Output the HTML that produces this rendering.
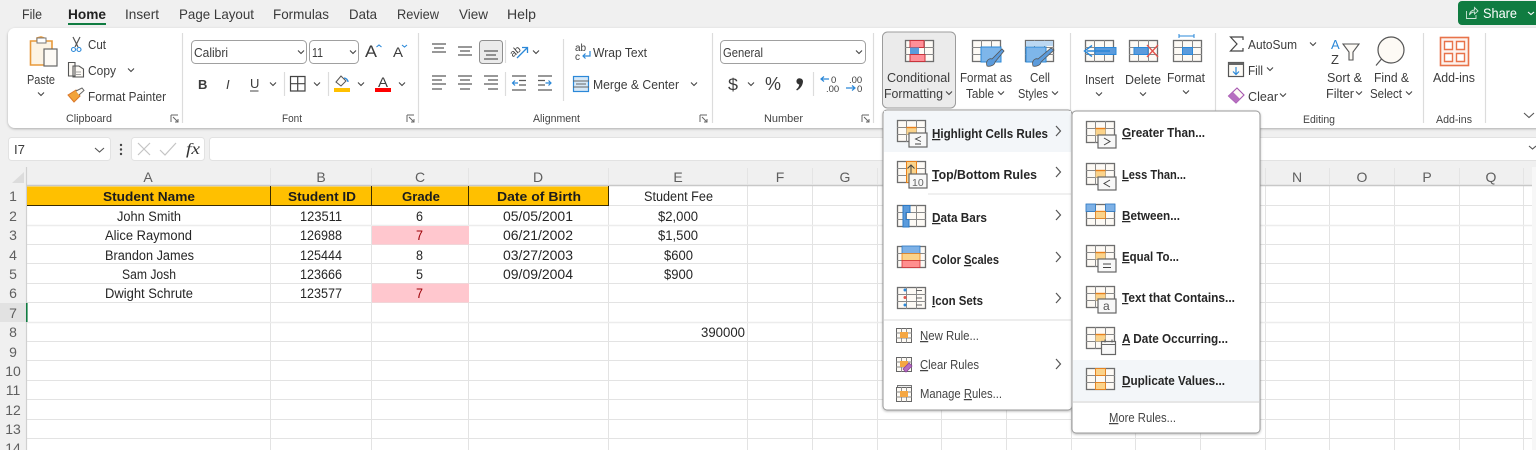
<!DOCTYPE html>
<html><head><meta charset="utf-8"><title>Excel</title>
<style>
html,body{margin:0;padding:0;width:1536px;height:450px;overflow:hidden;background:#f0f0f0}
svg{display:block;filter:blur(.3px)}
text{font-family:"Liberation Sans",sans-serif;font-size:12.5px;fill:#3c3c3c;white-space:pre}
.tab{font-size:14px;fill:#3a3a3a}
.lbl{font-size:11px;fill:#444}
.c{font-size:13.5px;fill:#262626}
.cb{font-size:13px;font-weight:bold;fill:#1c1c1c}
.h{font-size:14px;fill:#5f5f5f;text-anchor:middle}
.m{font-weight:bold;font-size:12.5px;fill:#262626}
.n{font-size:12.5px;fill:#444}
.u{text-decoration:underline}
.ch{fill:none;stroke:#444;stroke-width:1.1}
.ln{stroke:#5a5a5a;stroke-width:1.3;fill:none}
.sep{stroke:#dcdcdc;stroke-width:1.2}
.g{stroke:#e3e3e3;stroke-width:1}
.g2{stroke:#ececec;stroke-width:1.4}
</style></head><body>
<svg width="1536" height="450" viewBox="0 0 1536 450" xmlns="http://www.w3.org/2000/svg">
<defs>
<filter id="sh" x="-5%" y="-5%" width="110%" height="110%"><feDropShadow dx="0" dy="1" stdDeviation="1.2" flood-color="#000" flood-opacity=".28"/></filter>
<g id="chev"><path class="ch" d="M-3-1.5 0 1.5 3-1.5"/></g>
<g id="arr"><path d="M-3-5 1.5 0-3 5" fill="none" stroke="#555" stroke-width="1.2"/></g>
<g id="launch"><path d="M-4-4H3M-4-4V3M-2-2 3 3M3 0V3H0" fill="none" stroke="#666" stroke-width="1"/></g>
<g id="grid"><rect x=".5" y=".5" width="28" height="21" fill="#fdfaf5" stroke="#6e6e6e" stroke-width="1.3"/><path d="M9.5 0V22M19.5 0V22M0 7.5H29M0 14.5H29" stroke="#8a8a8a" stroke-width="1" fill="none"/></g>
<g id="hl"><use href="#grid"/><rect x="9.5" y="7.5" width="10" height="7" fill="#fbd38a"/><path d="M9.5 7.5H19.5" stroke="#e8801a" stroke-width="1.4"/></g>
<g id="small"><rect x=".5" y=".5" width="15" height="14" fill="#fdfaf5" stroke="#666" stroke-width="1"/><path d="M5.5 0V15M10.5 0V15M0 5H16M0 10H16" stroke="#888" stroke-width=".9"/></g>
</defs>

<!-- top chrome -->
<rect width="1536" height="450" fill="#f0f0f0"/>
<text class="tab" x="22" y="19" textLength="20" lengthAdjust="spacingAndGlyphs">File</text>
<text class="tab" x="68" y="19" textLength="38" lengthAdjust="spacingAndGlyphs" font-weight="bold" style="fill:#222">Home</text>
<rect x="68" y="23" width="38" height="2" fill="#107c41"/>
<text class="tab" x="125" y="19" textLength="34" lengthAdjust="spacingAndGlyphs">Insert</text>
<text class="tab" x="179" y="19" textLength="75" lengthAdjust="spacingAndGlyphs">Page Layout</text>
<text class="tab" x="273" y="19" textLength="56" lengthAdjust="spacingAndGlyphs">Formulas</text>
<text class="tab" x="349" y="19" textLength="28" lengthAdjust="spacingAndGlyphs">Data</text>
<text class="tab" x="397" y="19" textLength="42" lengthAdjust="spacingAndGlyphs">Review</text>
<text class="tab" x="459" y="19" textLength="29" lengthAdjust="spacingAndGlyphs">View</text>
<text class="tab" x="507" y="19" textLength="29" lengthAdjust="spacingAndGlyphs">Help</text>
<rect x="1458" y="1" width="90" height="24" rx="4" fill="#107c41"/>
<path d="M1466.500 11V18.500H1476V15M1469.500 15C1469.500 12 1472 10 1474.500 10V7.500L1478 11 1474.500 14V12C1472.500 12 1470.500 13 1469.500 15Z" fill="none" stroke="#cfe5d8" stroke-width=".9"/>
<text x="1483" y="18" textLength="34" lengthAdjust="spacingAndGlyphs" style="font-size:14px;fill:#fff">Share</text>
<path d="M1528 12l3 2.500 3-2.500" fill="none" stroke="#fff" stroke-width="1.1"/>

<!-- ribbon -->
<rect x="8" y="28" width="1540" height="100" rx="7" fill="#fff" filter="url(#sh)"/>
<path class="sep" d="M182.500 33V123M418.500 33V123M712.500 33V123M873.500 33V123M1070.500 33V123M1215.500 33V123M1423.500 33V123M1485.500 33V123"/>

<!-- clipboard -->
<path d="M30.500 41H37V38L41 37 44 38V41H52V65H30.500Z" fill="#fcf3e4" stroke="#e8993a" stroke-width="1.6"/>
<rect x="37" y="38" width="9" height="5" fill="#fff" stroke="#777"/>
<rect x="44" y="49" width="13" height="17" fill="#fdfaf5" stroke="#666" stroke-width="1.2"/>
<text x="27" y="84" textLength="28" lengthAdjust="spacingAndGlyphs">Paste</text>
<use href="#chev" x="41" y="94"/>
<path d="M73 37 78 47M80 37 75 47" stroke="#555" stroke-width="1.2" fill="none"/>
<circle cx="73.500" cy="49.500" r="2" fill="none" stroke="#2b88d8" stroke-width="1.1"/><circle cx="79" cy="49.500" r="2" fill="none" stroke="#2b88d8" stroke-width="1.1"/>
<text x="88" y="49" textLength="18" lengthAdjust="spacingAndGlyphs">Cut</text>
<path d="M68.500 62.500H75V76H68.500ZM73 66H79L83.500 69V77H73Z" fill="#fdfaf5" stroke="#555" stroke-width="1.1"/>
<path d="M76 72H81M76 74.500H81" stroke="#888" stroke-width=".8"/>
<text x="88" y="75" textLength="28" lengthAdjust="spacingAndGlyphs">Copy</text>
<use href="#chev" x="131" y="70"/>
<path d="M68 95 76 90 80 96 74 102Z" fill="#f2a33a" stroke="#d9772a" stroke-width="1"/>
<path d="M76 91 82 88 84 90.500 79 95" fill="#fdfaf5" stroke="#666" stroke-width="1"/>
<text x="88" y="101" textLength="78" lengthAdjust="spacingAndGlyphs">Format Painter</text>
<text class="lbl" x="66" y="122" textLength="46" lengthAdjust="spacingAndGlyphs">Clipboard</text>
<use href="#launch" x="175" y="119"/>

<!-- font -->
<rect x="191.500" y="40.500" width="115" height="23" rx="4" fill="#fff" stroke="#a0a0a0"/>
<text x="194" y="57" textLength="34" lengthAdjust="spacingAndGlyphs">Calibri</text>
<use href="#chev" x="301" y="52"/>
<rect x="309.500" y="40.500" width="49" height="23" rx="4" fill="#fff" stroke="#a0a0a0"/>
<text x="312" y="57" textLength="11" lengthAdjust="spacingAndGlyphs">11</text>
<use href="#chev" x="353" y="52"/>
<text x="365" y="57" style="font-size:17px" textLength="12" lengthAdjust="spacingAndGlyphs">A</text>
<path d="M376.500 47l2.500-2 2.500 2" fill="none" stroke="#2b88d8" stroke-width="1.1"/>
<text x="393" y="57" style="font-size:14px" textLength="10" lengthAdjust="spacingAndGlyphs">A</text>
<path d="M402 45l2.500 2 2.500-2" fill="none" stroke="#2b88d8" stroke-width="1.1"/>
<text x="198" y="89" style="font-weight:bold;font-size:13px">B</text>
<text x="226" y="89" style="font-style:italic;font-size:13px">I</text>
<text x="250" y="88" style="font-size:13px">U</text><path d="M250 91H258.500" stroke="#444"/>
<use href="#chev" x="273" y="84"/>
<path class="sep" d="M284.500 72V96M328.500 72V96M505.500 40V63M505.500 72V96M563.500 39V101M813.500 72V96"/>
<path d="M290.500 76.500H305V91H290.500ZM297.700 76.500V91M290.500 83.700H305" fill="none" stroke="#444" stroke-width="1.2"/>
<use href="#chev" x="317" y="84"/>
<path d="M336 82 341 76 346 81 341 86Z" fill="#fdfaf5" stroke="#555"/>
<path d="M344 78c2 0 4 2 4 4" fill="none" stroke="#2b88d8" stroke-width="1.3"/>
<rect x="334" y="88" width="16" height="4" fill="#ffc000"/>
<use href="#chev" x="361" y="84"/>
<text x="378" y="87" style="font-size:14px" textLength="10" lengthAdjust="spacingAndGlyphs">A</text>
<rect x="375" y="88" width="16" height="4" fill="#f00"/>
<use href="#chev" x="402" y="84"/>
<text class="lbl" x="282" y="122" textLength="20" lengthAdjust="spacingAndGlyphs">Font</text>
<use href="#launch" x="411" y="119"/>

<!-- alignment -->
<path class="ln" d="M432 44H446M434 48H444M432 52H446M458 47H472M460 51H470M458 55H472"/>
<rect x="479.500" y="40.500" width="23" height="23" rx="3" fill="#ebebeb" stroke="#8e8e8e"/>
<path class="ln" d="M484 51H498M486 55H496M484 59H498"/>
<text x="511" y="56" transform="rotate(-40 514 54)" style="font-size:10px">ab</text>
<path d="M517 58 527 48M522 47.500H527.500V53" fill="none" stroke="#2b88d8" stroke-width="1.3"/>
<use href="#chev" x="536" y="52"/>
<path class="ln" d="M432 76H446M432 80H442M432 84H446M432 89H442M458 76H472M460 80H470M458 84H472M460 89H470M484 76H498M488 80H498M484 84H498M488 89H498"/>
<path class="ln" d="M512 76H526M519 80.500H526M519 85H526M512 90H526M538 76H552M538 80.500H545M538 85H545M538 90H552"/>
<path d="M512.500 83H518M515 80.500 512.500 83 515 85.500M545.500 83H551M548.500 80.500 551 83 548.500 85.500" fill="none" stroke="#2b88d8" stroke-width="1.2"/>
<text x="575" y="51" style="font-size:10px">ab</text><text x="575" y="60" style="font-size:10px">c</text>
<path d="M590 51V56H583M585.500 53.500 583 56 585.500 58.500" fill="none" stroke="#2b88d8" stroke-width="1.2"/>
<text x="593" y="57" textLength="54" lengthAdjust="spacingAndGlyphs">Wrap Text</text>
<rect x="573.500" y="76.500" width="15" height="15" fill="#d6e8f7" stroke="#2b88d8" stroke-width="1.2"/>
<path d="M573 81H589M573 87H589M576 84H586" stroke="#666" stroke-width=".9" fill="none"/>
<text x="593" y="89" textLength="86" lengthAdjust="spacingAndGlyphs">Merge &amp; Center</text>
<use href="#chev" x="694" y="84"/>
<text class="lbl" x="533" y="122" textLength="47" lengthAdjust="spacingAndGlyphs">Alignment</text>
<use href="#launch" x="704" y="119"/>

<!-- number -->
<rect x="720.500" y="40.500" width="145" height="23" rx="4" fill="#fff" stroke="#a0a0a0"/>
<text x="723" y="57" textLength="40" lengthAdjust="spacingAndGlyphs">General</text>
<use href="#chev" x="859" y="52"/>
<text x="728" y="90" style="font-size:17px" textLength="10" lengthAdjust="spacingAndGlyphs">$</text>
<use href="#chev" x="751" y="84"/>
<text x="765" y="90" style="font-size:18px" textLength="16" lengthAdjust="spacingAndGlyphs">%</text>
<path d="M796.500 80.500A3.400 3.400 0 0 1 803 81C803 85 800.500 88.500 797 90.500L796.200 89.500C798 88 799 86.500 799.300 84.500A3.300 3.300 0 0 1 796.500 80.500Z" fill="#333"/>
<text x="831" y="83" style="font-size:9.500px">0</text><text x="826" y="92" style="font-size:9.500px">.00</text>
<path d="M829 79H821M824 76.500 821 79 824 81.500" fill="none" stroke="#2b88d8" stroke-width="1.2"/>
<text x="849" y="83" style="font-size:9.500px">.00</text><text x="857" y="92" style="font-size:9.500px">0</text>
<path d="M846 88H855M852 85.500 855 88 852 90.500" fill="none" stroke="#2b88d8" stroke-width="1.2"/>
<text class="lbl" x="764" y="122" textLength="39" lengthAdjust="spacingAndGlyphs">Number</text>
<use href="#launch" x="866" y="119"/>

<!-- styles -->
<rect x="882.500" y="32" width="73" height="76" rx="5" fill="#ebebeb" stroke="#9c9c9c"/>
<use href="#grid" x="905" y="40"/>
<rect x="910" y="40.500" width="14" height="7" fill="#ff8f98" stroke="#c8343c" stroke-width="1"/>
<rect x="910" y="47.500" width="9" height="7" fill="#5b9bdc"/>
<rect x="910" y="54.500" width="15" height="7" fill="#ff8f98" stroke="#c8343c" stroke-width="1"/>
<text x="887" y="82" textLength="63" lengthAdjust="spacingAndGlyphs">Conditional</text>
<text x="884" y="98" textLength="59" lengthAdjust="spacingAndGlyphs">Formatting</text>
<use href="#chev" x="949" y="93"/>
<use href="#grid" x="972" y="40"/>
<rect x="981" y="47" width="20" height="15" fill="#7eb6ea" stroke="#2b88d8"/>
<path d="M987 66C985 60 990 58 992 59L1002 49 1004 51 995 62C995 65 990 67 987 66Z" fill="#5b9bdc" stroke="#555" stroke-width=".8"/>
<text x="960" y="82" textLength="52" lengthAdjust="spacingAndGlyphs">Format as</text>
<text x="966" y="98" textLength="28" lengthAdjust="spacingAndGlyphs">Table</text>
<use href="#chev" x="1001" y="93"/>
<use href="#grid" x="1025" y="40"/>
<rect x="1026" y="47" width="20" height="15" fill="#7eb6ea" stroke="#2b88d8"/><rect x="1026" y="41" width="27" height="5" fill="#bcd8f2"/>
<path d="M1033 66C1031 60 1036 58 1038 59L1051 48 1054 50 1041 62C1041 65 1036 67 1033 66Z" fill="#5b9bdc" stroke="#555" stroke-width=".8"/>
<text x="1030" y="82" textLength="20" lengthAdjust="spacingAndGlyphs">Cell</text>
<text x="1018" y="98" textLength="30" lengthAdjust="spacingAndGlyphs">Styles</text>
<use href="#chev" x="1055" y="93"/>

<!-- cells -->
<use href="#grid" x="1085" y="40"/>
<rect x="1095" y="47.500" width="21" height="7" fill="#5b9bdc" stroke="#2b88d8"/>
<path d="M1110 51H1087M1092 45.500 1084.500 51 1092 56.500" fill="none" stroke="#2b88d8" stroke-width="1.4"/>
<text x="1085" y="84" textLength="29" lengthAdjust="spacingAndGlyphs">Insert</text>
<use href="#chev" x="1099" y="94"/>
<use href="#grid" x="1129" y="40"/>
<rect x="1134" y="47.500" width="14" height="7" fill="#5b9bdc" stroke="#2b88d8"/>
<path d="M1147 45 1158 57M1158 45 1147 57" stroke="#e4524a" stroke-width="1.3"/>
<text x="1125" y="84" textLength="36" lengthAdjust="spacingAndGlyphs">Delete</text>
<use href="#chev" x="1143" y="94"/>
<use href="#grid" x="1173" y="40"/>
<rect x="1182.500" y="47.500" width="10" height="7" fill="#5b9bdc" stroke="#2b88d8"/>
<path d="M1179 36H1194M1179 34V38M1194 34V38" stroke="#2b88d8" fill="none"/>
<text x="1167" y="82" textLength="38" lengthAdjust="spacingAndGlyphs">Format</text>
<use href="#chev" x="1186" y="92"/>

<!-- editing -->
<path d="M1243 40V37H1230.500L1237 44 1230.500 51H1243V48" fill="none" stroke="#444" stroke-width="1.2"/>
<text x="1248" y="49" textLength="49" lengthAdjust="spacingAndGlyphs">AutoSum</text>
<use href="#chev" x="1313" y="44"/>
<rect x="1228.500" y="62.500" width="15" height="14" fill="#fdfaf5" stroke="#555" stroke-width="1.2"/><rect x="1228.500" y="62.500" width="15" height="2.500" fill="#666"/>
<path d="M1236 67V74M1233 71.500 1236 74.500 1239 71.500" fill="none" stroke="#2b88d8" stroke-width="1.2"/>
<text x="1248" y="75" textLength="15" lengthAdjust="spacingAndGlyphs">Fill</text>
<use href="#chev" x="1270" y="69"/>
<path d="M1228.500 96 1237 88 1244 95 1236 103Z" fill="#fdfaf5" stroke="#a656b0" stroke-width="1.1"/>
<path d="M1228.500 96 1233 92 1240 99 1236 103Z" fill="#b66fc0"/>
<text x="1248" y="101" textLength="30" lengthAdjust="spacingAndGlyphs">Clear</text>
<use href="#chev" x="1283" y="95"/>
<text x="1331" y="49" style="font-size:13px;fill:#2b88d8">A</text>
<text x="1331" y="64" style="font-size:13px">Z</text>
<path d="M1343 44H1359L1353 52V60H1349V52Z" fill="#fdfaf5" stroke="#555" stroke-width="1.1"/>
<text x="1327" y="82" textLength="35" lengthAdjust="spacingAndGlyphs">Sort &amp;</text>
<text x="1326" y="98" textLength="28" lengthAdjust="spacingAndGlyphs">Filter</text>
<use href="#chev" x="1359" y="93"/>
<circle cx="1391" cy="50" r="13" fill="#fdfaf5" stroke="#555" stroke-width="1.2"/>
<path d="M1381.500 59 1376 65.500" stroke="#555" stroke-width="1.2"/>
<text x="1374" y="82" textLength="35" lengthAdjust="spacingAndGlyphs">Find &amp;</text>
<text x="1370" y="98" textLength="32" lengthAdjust="spacingAndGlyphs">Select</text>
<use href="#chev" x="1409" y="93"/>
<text class="lbl" x="1303" y="123" textLength="32" lengthAdjust="spacingAndGlyphs">Editing</text>
<rect x="1440.500" y="37.500" width="28" height="28" fill="#fdf3ee" stroke="#e8734a" stroke-width="1.6"/>
<path d="M1444.500 41.500H1452.500V49.500H1444.500ZM1456.500 41.500H1464.500V49.500H1456.500ZM1444.500 53.500H1452.500V61.500H1444.500ZM1456.500 53.500H1464.500V61.500H1456.500Z" fill="#fff" stroke="#e8734a" stroke-width="1.4"/>
<text x="1433" y="82" textLength="42" lengthAdjust="spacingAndGlyphs">Add-ins</text>
<text class="lbl" x="1436" y="123" textLength="36" lengthAdjust="spacingAndGlyphs">Add-ins</text>
<path d="M1524 113l5 4.500 5-4.500" fill="none" stroke="#555" stroke-width="1.1"/>

<!-- formula bar -->
<rect x="8.500" y="137.500" width="102" height="23" rx="3" fill="#fff" stroke="#e2e2e2"/>
<text x="14" y="154" textLength="11" lengthAdjust="spacingAndGlyphs">I7</text>
<path d="M95 148l4.500 4 4.500-4" fill="none" stroke="#555" stroke-width="1.1"/>
<circle cx="121" cy="145" r="1.200" fill="#444"/><circle cx="121" cy="149.500" r="1.200" fill="#444"/><circle cx="121" cy="154" r="1.200" fill="#444"/>
<rect x="131.500" y="137.500" width="73" height="23" rx="3" fill="#fff" stroke="#e2e2e2"/>
<path d="M138 143 150 155M150 143 138 155M160 150 165 155 176 143" fill="none" stroke="#c4c4c4" stroke-width="1.2"/>
<text x="186" y="154" style="font-family:'Liberation Serif',serif;font-style:italic;font-size:16px;fill:#333" textLength="14" lengthAdjust="spacingAndGlyphs">fx</text>
<rect x="209.500" y="137.500" width="1340" height="23" rx="3" fill="#fff" stroke="#e2e2e2"/>
<path d="M1529 146l3.500 3 3.500-3" fill="none" stroke="#555" stroke-width="1.1"/>

<!-- sheet -->
<rect x="27" y="186" width="1505" height="264" fill="#fff"/>
<rect x="1532" y="167" width="4" height="283" fill="#f7f7f7"/>
<path class="g" d="M270.500 186V450M371.500 186V450M468.500 186V450M608.500 186V450M747.500 186V450M812.500 186V450M877.500 186V450M941.500 186V450M1006.500 186V450M1071.500 186V450M1135.500 186V450M1200.500 186V450M1265.500 186V450M1329.500 186V450M1394.500 186V450M1459.500 186V450M1523.500 186V450"/>
<path class="g" d="M27 205.500H1532M27 225.500H1532M27 244.500H1532M27 263.500H1532M27 283.500H1532M27 302.500H1532M27 322.500H1532M27 341.500H1532M27 360.500H1532M27 380.500H1532M27 399.500H1532M27 419.500H1532M27 438.500H1532"/>
<path class="g2" d="M27 225.500H1532M27 322.500H1532"/>
<rect x="27" y="167" width="1505" height="19" fill="#f0f0f0"/>
<rect x="0" y="186" width="27" height="264" fill="#f0f0f0"/>
<rect x="0" y="303" width="27" height="19" fill="#e2e2e2"/>
<path d="M12 183H24V172Z" fill="#dcdcdc"/>
<path d="M27 185.500H1532" stroke="#c8c8c8" stroke-width="1.4"/>
<path d="M26.500 167V450" stroke="#d0d0d0" stroke-width="1.2"/>
<path d="M270.500 168V185M371.500 168V185M468.500 168V185M608.500 168V185M747.500 168V185M812.500 168V185M877.500 168V185M1265.500 168V185M1329.500 168V185M1394.500 168V185M1459.500 168V185M1523.500 168V185" stroke="#e4e4e4"/>
<rect x="26" y="303" width="1.600" height="19" fill="#107c41"/>
<rect x="27" y="186.500" width="582" height="19" fill="#ffc000"/>
<path d="M270.500 186V205.500M371.500 186V205.500M468.500 186V205.500M608.500 186V205.500M27 205.500H609" stroke="#3a2c00" stroke-width="1"/>
<rect x="372" y="226" width="97" height="18.500" fill="#ffc7ce"/>
<rect x="372" y="283.500" width="97" height="19" fill="#ffc7ce"/>

<text class="h" x="148" y="182">A</text><text class="h" x="321" y="182">B</text><text class="h" x="420" y="182">C</text><text class="h" x="538" y="182">D</text><text class="h" x="678" y="182">E</text><text class="h" x="780" y="182">F</text><text class="h" x="845" y="182">G</text>
<text class="h" x="1297" y="182">N</text><text class="h" x="1362" y="182">O</text><text class="h" x="1427" y="182">P</text><text class="h" x="1491" y="182">Q</text>
<text class="h" x="13" y="201">1</text><text class="h" x="13" y="221">2</text><text class="h" x="13" y="240">3</text><text class="h" x="13" y="260">4</text><text class="h" x="13" y="279">5</text><text class="h" x="13" y="298">6</text><text class="h" x="13" y="318">7</text><text class="h" x="13" y="337">8</text><text class="h" x="13" y="357">9</text><text class="h" x="13" y="376">10</text><text class="h" x="13" y="395">11</text><text class="h" x="13" y="415">12</text><text class="h" x="13" y="434">13</text><text class="h" x="13" y="453">14</text>

<text class="cb" x="103" y="201" textLength="92" lengthAdjust="spacingAndGlyphs">Student Name</text>
<text class="cb" x="288" y="201" textLength="68" lengthAdjust="spacingAndGlyphs">Student ID</text>
<text class="cb" x="402" y="201" textLength="38" lengthAdjust="spacingAndGlyphs">Grade</text>
<text class="cb" x="497" y="201" textLength="84" lengthAdjust="spacingAndGlyphs">Date of Birth</text>
<text class="c" x="644" y="201" textLength="69" lengthAdjust="spacingAndGlyphs">Student Fee</text>
<text class="c" x="117" y="221" textLength="64" lengthAdjust="spacingAndGlyphs">John Smith</text>
<text class="c" x="300" y="221" textLength="42" lengthAdjust="spacingAndGlyphs">123511</text>
<text class="c" x="416" y="221" textLength="7" lengthAdjust="spacingAndGlyphs">6</text>
<text class="c" x="503" y="221" textLength="70" lengthAdjust="spacingAndGlyphs">05/05/2001</text>
<text class="c" x="658" y="221" textLength="40" lengthAdjust="spacingAndGlyphs">$2,000</text>
<text class="c" x="105" y="240" textLength="87" lengthAdjust="spacingAndGlyphs">Alice Raymond</text>
<text class="c" x="300" y="240" textLength="42" lengthAdjust="spacingAndGlyphs">126988</text>
<text class="c" x="416" y="240" textLength="7" lengthAdjust="spacingAndGlyphs" style="fill:#9c0006">7</text>
<text class="c" x="503" y="240" textLength="70" lengthAdjust="spacingAndGlyphs">06/21/2002</text>
<text class="c" x="658" y="240" textLength="40" lengthAdjust="spacingAndGlyphs">$1,500</text>
<text class="c" x="105" y="260" textLength="89" lengthAdjust="spacingAndGlyphs">Brandon James</text>
<text class="c" x="300" y="260" textLength="42" lengthAdjust="spacingAndGlyphs">125444</text>
<text class="c" x="416" y="260" textLength="7" lengthAdjust="spacingAndGlyphs">8</text>
<text class="c" x="503" y="260" textLength="70" lengthAdjust="spacingAndGlyphs">03/27/2003</text>
<text class="c" x="664" y="260" textLength="29" lengthAdjust="spacingAndGlyphs">$600</text>
<text class="c" x="122" y="279" textLength="54" lengthAdjust="spacingAndGlyphs">Sam Josh</text>
<text class="c" x="300" y="279" textLength="42" lengthAdjust="spacingAndGlyphs">123666</text>
<text class="c" x="416" y="279" textLength="7" lengthAdjust="spacingAndGlyphs">5</text>
<text class="c" x="503" y="279" textLength="70" lengthAdjust="spacingAndGlyphs">09/09/2004</text>
<text class="c" x="664" y="279" textLength="29" lengthAdjust="spacingAndGlyphs">$900</text>
<text class="c" x="105" y="298" textLength="88" lengthAdjust="spacingAndGlyphs">Dwight Schrute</text>
<text class="c" x="300" y="298" textLength="42" lengthAdjust="spacingAndGlyphs">123577</text>
<text class="c" x="416" y="298" textLength="7" lengthAdjust="spacingAndGlyphs" style="fill:#9c0006">7</text>
<text class="c" x="701" y="337" textLength="44" lengthAdjust="spacingAndGlyphs">390000</text>

<!-- main menu -->
<rect x="883" y="110" width="189" height="300" rx="4" fill="#fff" stroke="#9a9a9a" filter="url(#sh)"/>
<rect x="884" y="111" width="187" height="41" fill="#f3f6f9"/>
<use href="#hl" x="897" y="120"/>
<rect x="909" y="133" width="18" height="14" fill="#f8f8f8" stroke="#666" stroke-width="1.2"/>
<path d="M921 136.500 915.500 139 921 141.500M915 144H921" fill="none" stroke="#444" stroke-width=".9"/>
<text class="m" x="932" y="138" textLength="116" lengthAdjust="spacingAndGlyphs"><tspan class="u">H</tspan>ighlight Cells Rules</text>
<use href="#arr" x="1059" y="131"/>
<use href="#grid" x="897" y="161"/>
<rect x="906.500" y="161.500" width="10" height="21" fill="#fbd38a" stroke="#e8801a"/>
<path d="M911 175V165M907.500 168.500 911 165 914.500 168.500" fill="none" stroke="#444"/>
<rect x="909" y="174" width="18" height="14" fill="#f8f8f8" stroke="#666" stroke-width="1.2"/>
<text x="912" y="186" style="font-size:10.500px;fill:#666">10</text>
<text class="m" x="932" y="179" textLength="105" lengthAdjust="spacingAndGlyphs"><tspan class="u">T</tspan>op/Bottom Rules</text>
<use href="#arr" x="1059" y="172"/>
<path d="M928 194H1071" stroke="#e6e6e6" stroke-width="1.300"/>
<use href="#grid" x="897" y="205"/>
<path d="M903 205.500H910V212.500H906V219.500H909V227H903Z" fill="#5b9bdc" stroke="#2b78c4"/>
<text class="m" x="932" y="222" textLength="55" lengthAdjust="spacingAndGlyphs"><tspan class="u">D</tspan>ata Bars</text>
<use href="#arr" x="1059" y="215"/>
<use href="#grid" x="897" y="246"/>
<rect x="902" y="246" width="18" height="7.500" fill="#7eb1e6" stroke="#2b78c4" stroke-width=".8"/>
<rect x="902" y="253.500" width="18" height="7" fill="#fbd38a" stroke="#e8801a" stroke-width=".8"/>
<rect x="902" y="260.500" width="18" height="7" fill="#ff8f8f" stroke="#d13438" stroke-width=".8"/>
<text class="m" x="932" y="264" textLength="67" lengthAdjust="spacingAndGlyphs">Color <tspan class="u">S</tspan>cales</text>
<use href="#arr" x="1059" y="257"/>
<use href="#grid" x="897" y="287"/>
<circle cx="905" cy="290" r="1.500" fill="#2b88d8"/><circle cx="905" cy="297.500" r="1.500" fill="#e4524a"/><circle cx="905" cy="305" r="1.500" fill="#2b88d8"/>
<path d="M916 290.500H922M916 298H922M916 305H922" stroke="#666"/>
<text class="m" x="932" y="305" textLength="51" lengthAdjust="spacingAndGlyphs"><tspan class="u">I</tspan>con Sets</text>
<use href="#arr" x="1059" y="298"/>
<path d="M884 320H1071" stroke="#e2e2e2" stroke-width="1.300"/>
<use href="#small" x="896" y="328"/>
<rect x="900" y="332" width="8" height="6" fill="#f5a742"/>
<text class="n" x="920" y="340" textLength="59" lengthAdjust="spacingAndGlyphs"><tspan class="u">N</tspan>ew Rule...</text>
<use href="#small" x="896" y="357"/>
<rect x="900" y="361" width="8" height="6" fill="#f5a742"/>
<path d="M903 369 909 363 912 366 906 372Z" fill="#b66fc0" stroke="#8f3fa0" stroke-width=".8"/>
<text class="n" x="920" y="369" textLength="59" lengthAdjust="spacingAndGlyphs"><tspan class="u">C</tspan>lear Rules</text>
<use href="#arr" x="1059" y="364"/>
<rect x="897.500" y="385.500" width="14" height="13" fill="#eee" stroke="#777"/>
<use href="#small" x="896" y="387"/>
<rect x="900" y="391" width="8" height="6" fill="#f5a742"/>
<text class="n" x="920" y="398" textLength="82" lengthAdjust="spacingAndGlyphs">Manage <tspan class="u">R</tspan>ules...</text>

<!-- sub menu -->
<rect x="1072" y="111" width="188" height="322" rx="4" fill="#fff" stroke="#9a9a9a" filter="url(#sh)"/>
<rect x="1073" y="360" width="186" height="41" fill="#f3f6f9"/>
<path d="M1073 402H1259" stroke="#e6e6e6" stroke-width="2"/>

<use href="#hl" x="1086" y="121"/>
<rect x="1098" y="135" width="18" height="13" fill="#f8f8f8" stroke="#666" stroke-width="1.2"/>
<path d="M1104 138 1110 141.500 1104 145" fill="none" stroke="#444"/>
<text class="m" x="1122" y="137" textLength="83" lengthAdjust="spacingAndGlyphs"><tspan class="u">G</tspan>reater Than...</text>
<use href="#hl" x="1086" y="163"/>
<rect x="1098" y="177" width="18" height="13" fill="#f8f8f8" stroke="#666" stroke-width="1.2"/>
<path d="M1110 180 1104 183.500 1110 187" fill="none" stroke="#444"/>
<text class="m" x="1122" y="179" textLength="64" lengthAdjust="spacingAndGlyphs"><tspan class="u">L</tspan>ess Than...</text>
<use href="#hl" x="1086" y="204"/>
<rect x="1086" y="204" width="9.500" height="7.500" fill="#7eb1e6" stroke="#2b78c4" stroke-width=".8"/>
<rect x="1105.500" y="204" width="9.500" height="7.500" fill="#7eb1e6" stroke="#2b78c4" stroke-width=".8"/>
<rect x="1095.500" y="211.500" width="10" height="7" fill="#fbd38a" stroke="#e8801a" stroke-width=".8"/>
<text class="m" x="1122" y="220" textLength="58" lengthAdjust="spacingAndGlyphs"><tspan class="u">B</tspan>etween...</text>
<use href="#hl" x="1086" y="245"/>
<rect x="1098" y="259" width="18" height="13" fill="#f8f8f8" stroke="#666" stroke-width="1.2"/>
<path d="M1103 264H1111M1103 267.500H1111" stroke="#444"/>
<text class="m" x="1122" y="261" textLength="57" lengthAdjust="spacingAndGlyphs"><tspan class="u">E</tspan>qual To...</text>
<use href="#hl" x="1086" y="286"/>
<rect x="1098" y="299" width="18" height="14" fill="#f8f8f8" stroke="#666" stroke-width="1.2"/>
<text x="1103" y="310" style="font-size:12px;fill:#555">a</text>
<text class="m" x="1122" y="302" textLength="113" lengthAdjust="spacingAndGlyphs"><tspan class="u">T</tspan>ext that Contains...</text>
<use href="#hl" x="1086" y="327"/>
<rect x="1101.500" y="341.500" width="14" height="13" fill="#f8f8f8" stroke="#666" stroke-width="1.2"/>
<path d="M1101.500 344.500H1115.500M1105 339.500V342.500M1112 339.500V342.500" stroke="#666" stroke-width="1.1"/>
<text class="m" x="1122" y="343" textLength="106" lengthAdjust="spacingAndGlyphs"><tspan class="u">A</tspan> Date Occurring...</text>
<use href="#grid" x="1086" y="368"/>
<rect x="1095.500" y="368.500" width="10" height="7" fill="#fbd38a" stroke="#e8801a" stroke-width=".9"/>
<rect x="1095.500" y="382.500" width="10" height="7" fill="#fbd38a" stroke="#e8801a" stroke-width=".9"/>
<text class="m" x="1122" y="385" textLength="103" lengthAdjust="spacingAndGlyphs"><tspan class="u">D</tspan>uplicate Values...</text>
<text class="n" x="1109" y="422" textLength="67" lengthAdjust="spacingAndGlyphs"><tspan class="u">M</tspan>ore Rules...</text>
</svg>
</body></html>
